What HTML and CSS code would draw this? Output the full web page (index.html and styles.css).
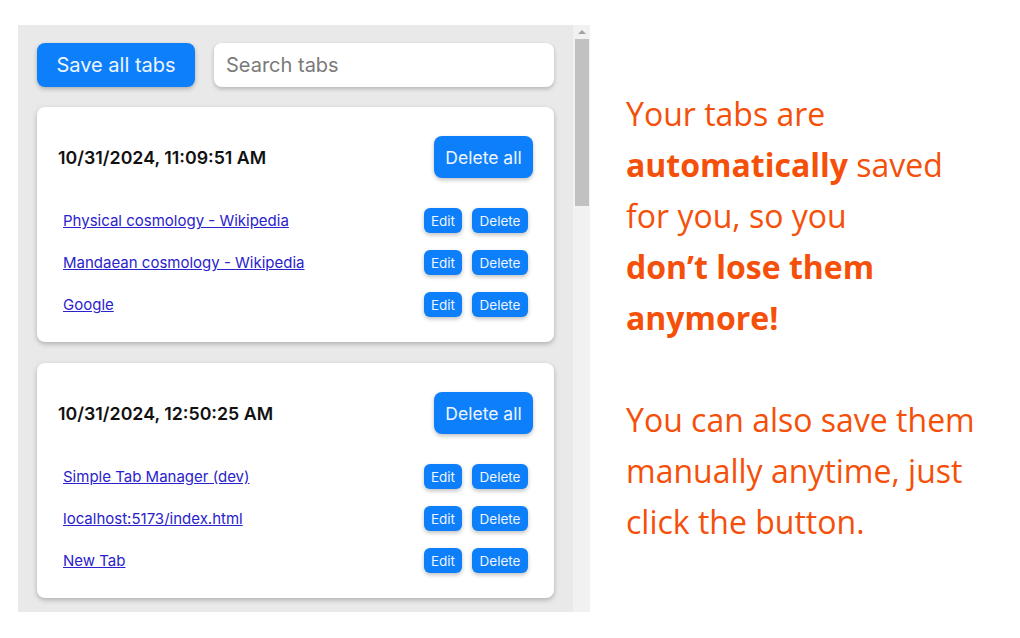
FILE: index.html
```html
<!DOCTYPE html>
<html>
<head>
<meta charset="utf-8">
<link rel="stylesheet" href="styles.css">
</head>
<body>
<div class="page">
  <div class="panel">
    <div class="content">
      <div class="topbar">
        <button class="btn save">Save all tabs</button>
        <input class="search" type="text" placeholder="Search tabs">
      </div>
      <div class="card">
        <div class="card-head">
          <span class="date">10/31/2024, 11:09:51 AM</span>
          <button class="btn delall">Delete all</button>
        </div>
        <ul class="tabs">
          <li><a href="#">Physical cosmology - Wikipedia</a><span class="acts"><button class="btn sm edit">Edit</button><button class="btn sm del">Delete</button></span></li>
          <li><a href="#">Mandaean cosmology - Wikipedia</a><span class="acts"><button class="btn sm edit">Edit</button><button class="btn sm del">Delete</button></span></li>
          <li><a href="#">Google</a><span class="acts"><button class="btn sm edit">Edit</button><button class="btn sm del">Delete</button></span></li>
        </ul>
      </div>
      <div class="card">
        <div class="card-head">
          <span class="date">10/31/2024, 12:50:25 AM</span>
          <button class="btn delall">Delete all</button>
        </div>
        <ul class="tabs">
          <li><a href="#">Simple Tab Manager (dev)</a><span class="acts"><button class="btn sm edit">Edit</button><button class="btn sm del">Delete</button></span></li>
          <li><a href="#">localhost:5173/index.html</a><span class="acts"><button class="btn sm edit">Edit</button><button class="btn sm del">Delete</button></span></li>
          <li><a href="#">New Tab</a><span class="acts"><button class="btn sm edit">Edit</button><button class="btn sm del">Delete</button></span></li>
        </ul>
      </div>
    </div>
    <div class="scrollbar">
      <div class="arrow"></div>
      <div class="thumb"></div>
    </div>
  </div>
  <div class="promo">
    <p>Your tabs are<br><b>automatically</b> saved<br>for you, so you<br><b>don’t lose them<br>anymore!</b></p>
    <p>You can also save them<br>manually anytime, just<br>click the button.</p>
  </div>
</div>
</body>
</html>
```

FILE: styles.css
```css
html, body {
  margin: 0;
  padding: 0;
  background: #ffffff;
}
.page {
  display: flex;
  align-items: flex-start;
  padding: 25px 0 0 18px;
  font-family: Inter, "Liberation Sans", sans-serif;
}
.panel {
  display: flex;
  width: 572px;
  height: 587px;
  background: #e9e9e9;
  overflow: hidden;
}
.content {
  flex: 1;
  padding: 18px 19px 0 19px;
  overflow: hidden;
}
.topbar {
  display: flex;
  gap: 19px;
  height: 44px;
}
.btn {
  background: #0d7ffb;
  color: #eef5ff;
  border: none;
  font-family: Inter, "Liberation Sans", sans-serif;
  box-shadow: 0 2px 4px rgba(0, 0, 0, 0.25);
  cursor: pointer;
}
.save {
  width: 158px;
  height: 44px;
  border-radius: 8px;
  font-size: 20px;
  padding: 0;
}
.search {
  flex: 1;
  height: 44px;
  box-sizing: border-box;
  border: none;
  border-radius: 8px;
  background: #fff;
  padding: 0 12px;
  font-family: Inter, "Liberation Sans", sans-serif;
  font-size: 20px;
  box-shadow: 0 2px 4px rgba(0, 0, 0, 0.22);
  outline: none;
}
.search::placeholder {
  color: #7a7a7a;
}
.card {
  margin-top: 20px;
  background: #fff;
  border-radius: 8px;
  box-shadow: 0 2px 5px rgba(0, 0, 0, 0.25);
  padding: 29px 21px 25px 21px;
}
.card + .card {
  margin-top: 21px;
}
.card-head {
  display: flex;
  justify-content: space-between;
  align-items: center;
  height: 42px;
}
.date {
  font-size: 17.8px;
  font-weight: 600;
  color: #111;
}
.delall {
  width: 99px;
  height: 42px;
  border-radius: 8px;
  font-size: 17.5px;
  padding: 0;
}
.tabs {
  list-style: none;
  margin: 30px 0 0 0;
  padding: 0 5px;
  display: flex;
  flex-direction: column;
  gap: 17px;
}
.tabs li {
  display: flex;
  justify-content: space-between;
  align-items: center;
  height: 25px;
}
.tabs a {
  color: #2a22cc;
  font-size: 15px;
  text-decoration: underline;
}
.acts {
  display: flex;
  gap: 10px;
}
.sm {
  height: 25px;
  border-radius: 6px;
  font-size: 13.5px;
  padding: 0;
}
.edit { width: 38px; }
.del { width: 56px; }
.scrollbar {
  width: 17px;
  background: #f1f1f1;
  display: flex;
  flex-direction: column;
  align-items: center;
}
.arrow {
  margin-top: 5px;
  width: 0;
  height: 0;
  border-left: 4px solid transparent;
  border-right: 4px solid transparent;
  border-bottom: 4px solid #a3a3a3;
}
.thumb {
  margin-top: 5px;
  width: 14px;
  height: 167px;
  background: #c1c1c1;
}
.promo {
  margin-left: 36px;
  margin-top: 63px;
  width: 380px;
  font-family: "Open Sans", sans-serif;
  font-size: 32px;
  line-height: 51px;
  color: #f5500a;
}
.promo p {
  margin: 0 0 51px 0;
  white-space: nowrap;
}
.promo b {
  font-weight: 700;
}
```
